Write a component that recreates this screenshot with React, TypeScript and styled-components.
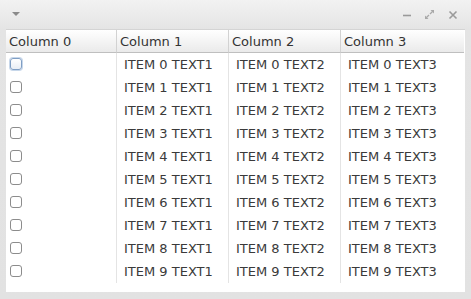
import React from "react";
import styled, { createGlobalStyle } from "styled-components";

const Global = createGlobalStyle`
  html, body { margin: 0; padding: 0; background: #e2e2e2; }
  body { font-family: "DejaVu Sans", "Liberation Sans", sans-serif; }
`;

const Window = styled.div`
  width: 471px;
  height: 299px;
  display: flex;
  flex-direction: column;
  background: linear-gradient(#f2f2f2, #e4e4e4 30px, #e2e2e2);
  box-sizing: border-box;
`;

const TitleBar = styled.div`
  height: 29px;
  flex: none;
  display: flex;
  align-items: center;
  padding: 0 7px 0 12px;
  box-sizing: border-box;
`;

const Spacer = styled.div`
  flex: 1;
`;

const IconBtn = styled.div`
  width: 23px;
  height: 14px;
  display: flex;
  align-items: center;
  justify-content: center;
`;

const Content = styled.div`
  flex: 1;
  margin: 0 6px 7px 6px;
  background: #ffffff;
  border-top: 1px solid #d4d4d4;
  box-sizing: border-box;
`;

const Grid = styled.div`
  display: grid;
  grid-template-columns: 111px 112px 112px 1fr;
  margin-right: 1px;
`;

const HeaderCell = styled.div<{ $last?: boolean }>`
  height: 22px;
  display: flex;
  align-items: center;
  padding-left: 3px;
  font-size: 13px;
  color: #333333;
  background: linear-gradient(#ffffff, #eaeaea);
  border-bottom: 1px solid #bfbfbf;
  border-right: ${(p) => (p.$last ? "none" : "1px solid #d2d2d2")};
  box-sizing: content-box;
  white-space: nowrap;
`;

const Cell = styled.div<{ $last?: boolean; $check?: boolean }>`
  height: 23px;
  display: flex;
  align-items: center;
  padding-left: ${(p) => (p.$check ? "4px" : "7px")};
  font-size: 13px;
  color: #3a3a3a;
  border-right: ${(p) => (p.$last ? "none" : "1px solid #e4e4e4")};
  white-space: nowrap;
`;

const Check = styled.div<{ $focus?: boolean }>`
  width: 10px;
  height: 10px;
  border-radius: 3px;
  border: 1px solid ${(p) => (p.$focus ? "#7f9ec4" : "#8c8c8c")};
  background: ${(p) => (p.$focus ? "linear-gradient(#ffffff, #e9eef5)" : "#ffffff")};
  box-shadow: ${(p) => (p.$focus ? "0 0 0 1px #c7d7ea" : "none")};
  margin-top: -1px;
`;

const rows = Array.from({ length: 10 }, (_, i) => i);

export default function App() {
  return (
    <>
      <Global />
      <Window>
        <TitleBar>
          <svg width="8" height="5" viewBox="0 0 8 5">
            <path d="M0 0 L8 0 L4 4 Z" fill="#8a8a8a" />
          </svg>
          <Spacer />
          <IconBtn>
            <svg width="10" height="10" viewBox="0 0 10 10">
              <path d="M1 5.5 H9" stroke="#9a9a9a" strokeWidth="1.6" />
            </svg>
          </IconBtn>
          <IconBtn>
            <svg width="11" height="11" viewBox="0 0 11 11">
              <path d="M6.5 1 H10 V4.5 Z M1 6.5 V10 H4.5 Z" fill="#a8a8a8" />
              <path d="M8.5 2.5 L6 5 M2.5 8.5 L5 6" stroke="#a8a8a8" strokeWidth="1.3" />
            </svg>
          </IconBtn>
          <IconBtn>
            <svg width="10" height="10" viewBox="0 0 10 10">
              <path d="M1.5 1.5 L8.5 8.5 M8.5 1.5 L1.5 8.5" stroke="#9a9a9a" strokeWidth="1.6" />
            </svg>
          </IconBtn>
        </TitleBar>
        <Content>
          <Grid>
            <HeaderCell>Column 0</HeaderCell>
            <HeaderCell>Column 1</HeaderCell>
            <HeaderCell>Column 2</HeaderCell>
            <HeaderCell $last>Column 3</HeaderCell>
            {rows.map((i) => (
              <React.Fragment key={i}>
                <Cell $check>
                  <Check $focus={i === 0} />
                </Cell>
                <Cell>ITEM {i} TEXT1</Cell>
                <Cell>ITEM {i} TEXT2</Cell>
                <Cell $last>ITEM {i} TEXT3</Cell>
              </React.Fragment>
            ))}
          </Grid>
        </Content>
      </Window>
    </>
  );
}
